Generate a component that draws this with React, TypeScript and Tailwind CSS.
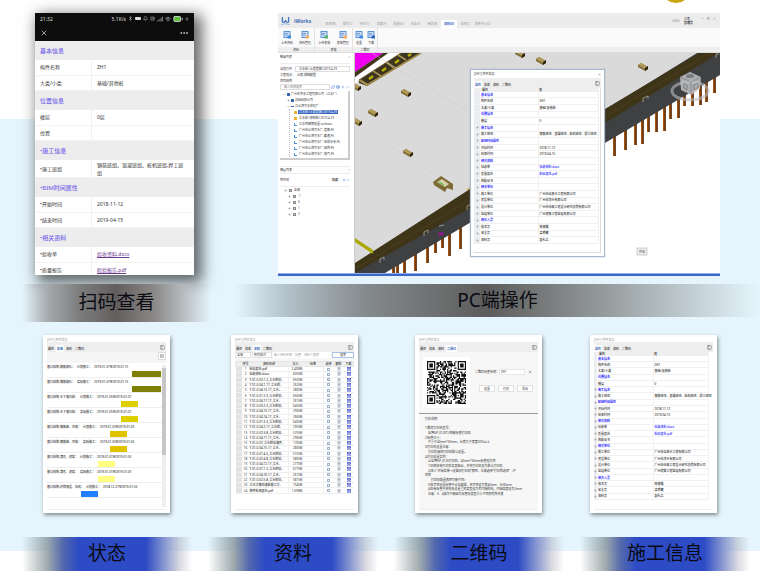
import React from "react";
import {
  X,
  Ellipsis,
  Bell,
  AlarmClock,
  Wifi,
  Signal,
  Bluetooth,
  BatteryMedium,
  Zap,
  PanelLeft,
  RefreshCw,
  Globe,
  Trash2,
  SquarePen,
  Download,
  Plus,
  Minus,
} from "lucide-react";

/* ---------- Phone ---------- */

type Pair = [string, string, boolean?];

function PhoneSection({ title, rows, tall }: { title: string; rows: Pair[]; tall?: boolean }) {
  return (
    <section className="shrink-0">
      <h2 className="flex h-[19px] items-center bg-[#ededed] pl-[5px] text-[6px] font-medium leading-[8px] text-[#7767ea]">
        {title}
      </h2>
      <dl className={tall ? "grid h-[18px]" : "grid h-[31px] grid-rows-2"}>
        {rows.map(([k, v, link]) => (
          <div key={k} className="grid grid-cols-[57px_1fr] items-stretch border-b border-[#f3f3f3]">
            <dt className="flex items-center border-r border-[#f0f0f0] pl-[5px]">{k}</dt>
            <dd className="flex items-center pl-[5px] pr-2">
              {link ? (
                <a href="#file" className="text-[#6b3a8f] underline">
                  {v}
                </a>
              ) : (
                v
              )}
            </dd>
          </div>
        ))}
      </dl>
    </section>
  );
}

function Phone() {
  return (
    <div className="flex h-[262px] w-[159px] flex-col overflow-hidden bg-white text-[5px] leading-[8px] text-[#333] shadow-[5px_5px_14px_3px_rgba(0,0,0,0.6)]">
      <header className="h-7 shrink-0 bg-[#0d0d0d] px-[5px] text-[#ddd]">
        <div className="flex h-[11px] items-center justify-between">
          <span>21:32</span>
          <span className="flex items-center gap-[2px]">
            <span>5.1K/s</span>
            <Bluetooth size={5} />
            <span className="h-[3px] w-[6px] rounded-[1px] bg-[#ddd]" />
            <Bell size={5} />
            <AlarmClock size={5} />
            <Signal size={6} />
            <Wifi size={6} />
            <BatteryMedium size={10} className="fill-[#5fbf3a]" />
            <Zap size={4} />
          </span>
        </div>
        <div className="flex h-[17px] items-center justify-between">
          <button aria-label="关闭">
            <X size={8} strokeWidth={2} />
          </button>
          <button aria-label="更多">
            <Ellipsis size={10} strokeWidth={2} />
          </button>
        </div>
      </header>
      <PhoneSection title="基本信息" rows={[["构件名称", "ZH1"], ["大类/小类", "基础/其他桩"]]} />
      <PhoneSection title="位置信息" rows={[["楼层", "0层"], ["位置", ""]]} />
      <PhoneSection title="•施工信息" tall rows={[["•施工班组", "钢筋班组、混凝班组、桩机班组,焊工班组"]]} />
      <PhoneSection title="•BIM时间属性" rows={[["•开始时间", "2018-11-12"], ["•结束时间", "2019-04-15"]]} />
      <PhoneSection title="•相关资料" rows={[["•验收单", "验收资料.docx", true], ["•质量报告", "检验报告.pdf", true]]} />
    </div>
  );
}

/* ---------- Shared property sheet ---------- */

const sheet: { k: string; v?: string; head?: boolean; link?: boolean }[] = [
  { k: "基本信息", head: true },
  { k: "构件名称", v: "ZH1" },
  { k: "大类/小类", v: "基础/其他桩" },
  { k: "位置信息", head: true },
  { k: "楼层", v: "0" },
  { k: "施工信息", head: true },
  { k: "施工班组", v: "钢筋班组、混凝班组、桩机班组、焊工班组" },
  { k: "BIM时间属性", head: true },
  { k: "开始时间", v: "2018-11-12" },
  { k: "结束时间", v: "2019-04-15" },
  { k: "相关资料", head: true },
  { k: "验收单", v: "验收资料.docx", link: true },
  { k: "质量报告", v: "检验报告.pdf", link: true },
  { k: "构配证书" },
  { k: "相关单位", head: true },
  { k: "施工单位", v: "广州市自来水工程有限公司" },
  { k: "建设单位", v: "广州市净水有限公司" },
  { k: "设计单位", v: "广州市市政工程设计研究总院有限公司" },
  { k: "监理单位", v: "广州建筑工程监理有限公司" },
  { k: "相关人员", head: true },
  { k: "技术员", v: "陈俊雄" },
  { k: "安全员", v: "梁明耀" },
  { k: "资料员", v: "彭礼兵" },
];

function PropertyTable({ narrow }: { narrow?: boolean }) {
  return (
    <table
      className={
        narrow
          ? "h-[148px] w-[115px] table-fixed border-collapse"
          : "h-[156px] w-[125px] table-fixed border-collapse"
      }
    >
      <colgroup>
        <col className={narrow ? "w-[3px]" : "w-[6px]"} />
        <col className={narrow ? "w-[56px]" : "w-[58px]"} />
        <col />
      </colgroup>
      <thead>
        <tr className="bg-[#efefef] text-left">
          <td className="p-0" />
          <th className="p-0 pl-[2px] font-medium">属性</th>
          <th className="p-0 pl-px font-medium">值</th>
        </tr>
      </thead>
      <tbody>
        {sheet.map((r, i) => (
          <tr key={r.k} className="border-b border-[#f1f1f1]">
            <td className="bg-[#e9ecf0] p-0">
              {i > 4 && <Plus size={3} className="mx-auto text-[#555]" />}
            </td>
            <td className={r.head ? "p-0 pl-px font-bold text-[#1a1aff]" : "p-0 pl-px font-medium"}>{r.k}</td>
            <td className="whitespace-nowrap border-l border-r border-[#f1f1f1] p-0 pl-px font-medium">
              {r.link ? (
                <a href="#file" className="text-[#1a1aff]">
                  {r.v}
                </a>
              ) : (
                r.v
              )}
            </td>
          </tr>
        ))}
      </tbody>
    </table>
  );
}

function PanelTabs({ active }: { active: number }) {
  return (
    <div className="flex h-[10px] shrink-0 items-center justify-between bg-[#eee] pr-px">
      <div className="flex h-full items-end gap-px">
        {["属性", "状态", "资料", "二维码"].map((t, i) => (
          <button
            key={t}
            className={
              i === active ? "h-[7px] bg-white px-px font-bold text-[#2f62b5]" : "h-[7px] px-px font-medium text-[#333]"
            }
          >
            {t}
          </button>
        ))}
      </div>
      <button aria-label="面板" className="text-[#555]">
        <PanelLeft size={5} />
      </button>
    </div>
  );
}

/* ---------- Desktop application ---------- */

const menu = ["项目(W)", "操作(C)", "技术(T)", "进度(P)", "质量(Q)", "安全(S)", "商务(B)", "资料(D)", "协同(C)", "系统中心(O)"];

const ribbon = [
  { name: "资料", items: [["上传资料", "#3f8ad8"], ["资料管理", "#f0b060"]], w: "w-[37px]" },
  { name: "表格", items: [["上传表格", "#58b070"], ["表格管理", "#f0b060"]], w: "w-[38px]" },
  { name: "二维码", items: [["设置", "#3f8ad8"], ["下载", "#2f62c5"]], w: "w-[25px]" },
] as const;

/* Document sheet with a small coloured badge in its corner */
function RibbonIcon({ accent }: { accent: string }) {
  return (
    <svg viewBox="0 0 8 8" className="size-2" aria-hidden="true">
      <rect x="1" y="0.5" width="6" height="6" fill="#cfe0f6" stroke="#5b8fd6" />
      <path d="M2 2.5h3M2 4h2.5" stroke="#4a7fce" strokeWidth="0.7" />
      <rect x="4.5" y="4.5" width="3.5" height="3" fill={accent} />
    </svg>
  );
}

const tree = [
  "江水桩 (土建建筑) 2019.4.29",
  "江水桩 (预制桩) 2019.4.29",
  "江水构筑物设置 tushuzu",
  "广州市沙湾污水厂-建筑.F5",
  "广州市沙湾污水厂-暖通.F5",
  "广州市沙湾污水厂-给排水专.F5",
  "广州市沙湾污水厂-结构.F5",
  "广州市沙湾污水厂-电气.F5",
];

function SidePane() {
  return (
    <aside className="flex w-[77px] shrink-0 flex-col border-r border-[#ccc] bg-white pl-[2px] pr-1 text-[#333]">
      <div className="flex h-2 items-center justify-between">
        <span>数据列表</span>
        <span className="text-[#3f6db5]">«</span>
      </div>
      <div className="mt-[2px] flex h-[9px] items-center gap-[3px] border-t border-[#eee] pt-[2px]">
        <label htmlFor="current" className="w-3 whitespace-nowrap">
          当前打开
        </label>
        <select
          id="current"
          className="h-[6px] min-w-0 flex-1 appearance-none border border-[#ddd] bg-white pl-[3px] leading-[4px]"
        >
          <option>江水桩 (土建建筑) 2019.4.29</option>
        </select>
      </div>
      <div className="flex h-[6px] items-center gap-[2px]">
        <span>工程地点：</span>
        <span className="font-medium">土建-预制模型</span>
      </div>
      <div className="flex h-[6px] items-center">项目结构</div>
      <div className="flex h-[6px] items-center gap-px text-[#3f7bdc]">
        <input
          aria-label="输入名称搜索"
          placeholder="输入名称搜索"
          className="h-[6px] min-w-0 flex-1 border border-[#ddd] px-[3px] leading-[4px] placeholder:text-[#777]"
        />
        <RefreshCw size={4} />
        <Globe size={4} />
        <Plus size={4} />
        <Minus size={4} />
      </div>
      <div className="mt-px h-[69px] border-b-2 border-r-2 border-[#ccc] pl-[3px]">
        <div className="flex h-[6px] items-center gap-px">
          <Minus size={3} />
          <span className="size-[3px] bg-[#3567b5]" />
          <span className="whitespace-nowrap">广州市净水工程有限公司（江水厂）</span>
        </div>
        <div className="ml-1 flex h-[6px] items-center gap-px">
          <Plus size={3} />
          <span className="size-[3px] bg-[#3567b5]" />
          <span>初始标段公司</span>
        </div>
        <div className="ml-1 flex h-[6px] items-center gap-px">
          <Minus size={3} />
          <span className="h-px w-[3px] bg-[#3567b5]" />
          <span>江沙湾污水处理厂</span>
        </div>
        <ul className="ml-[6px] border-l border-dotted border-[#bbb] pl-1">
          {tree.map((t, i) => (
            <li key={t} className="flex h-[6px] items-center gap-px whitespace-nowrap">
              <span className={i < 2 ? "size-[3px] bg-[#f0b030]" : "size-[3px] border-b border-l border-[#4a90d9]"} />
              <span className={i === 0 ? "bg-[#3465c0] px-px text-white" : "px-px"}>{t}</span>
            </li>
          ))}
        </ul>
      </div>
      <div className="mt-[6px] flex h-2 items-center justify-between border-y border-[#eee]">
        <span>楼层列表</span>
        <span className="text-[#3f6db5]">«</span>
      </div>
      <div className="mt-[2px] flex h-2 items-center">
        <span>构件树</span>
        <span className="ml-auto mr-1 font-medium">隐藏</span>
        <Plus size={4} className="text-[#3f7bdc]" />
        <Minus size={4} className="text-[#3f7bdc]" />
      </div>
      <div className="mt-[2px] flex-1 border-t border-[#eee] pl-1">
        {["全部", "-1", "0", "1", "2"].map((t, i) => (
          <label key={t} className={i ? "ml-1 flex h-[6px] items-center gap-[2px]" : "flex h-[6px] items-center gap-[2px]"}>
            <Plus size={3} />
            <input
              type="checkbox"
              defaultChecked
              className="size-[3px] appearance-none border border-[#888] bg-[#ddd]"
            />
            {t}
          </label>
        ))}
      </div>
    </aside>
  );
}

const piles: [number, number, number][] = [
  [38, 208, 220], [42, 205, 220], [49, 198, 220], [60, 190, 218], [72, 184, 210], [80, 178, 200],
  [87, 175, 195], [94, 170, 203], [105, 162, 196], [259, 84, 103], [270, 76, 97], [280, 70, 92],
  [287, 66, 91], [293, 60, 79], [301, 57, 79], [309, 53, 78], [315, 48, 66], [323, 43, 65],
  [329, 40, 53], [337, 36, 53], [345, 32, 52], [351, 28, 49], [359, 22, 40],
];

const blocks: [number, number][] = [[51, 40], [18, 60], [1, 34], [2, 69], [53, 100], [165, 1], [186, 8], [288, 14]];

function Scene() {
  return (
    <svg viewBox="0 0 365 220" preserveAspectRatio="xMinYMin slice" className="h-full w-full bg-white" aria-label="三维模型">
      <polygon points="0,0 342,0 0,212" fill="#dadada" />
      <polygon points="0,24 34,0 46,0 4,27 0,32" fill="#fff" />
      <polygon points="0,0 28,0 0,19" fill="#ee00ee" />
      <polygon points="28,0 33,0 0,24 0,19" fill="#40331a" />
      <polygon points="4,27 46,0 66,0 12,33 4,30" fill="#3d3420" />
      <path d="M4 27L12 32L66 0" fill="none" stroke="#a08a4a" strokeWidth="1.8" />
      <path d="M4 27L46 0" fill="none" stroke="#6f6034" strokeWidth="1" />
      <path d="M5 27l8 5M18 18l8 5M31 9l8 6M43 2l8 5" stroke="#a89252" strokeWidth="1.8" />
      <path d="M14 26l4-3M27 18l4-3M40 10l4-3M53 3l3-2" stroke="#b8b000" strokeWidth="2.4" />
      {piles.map(([x, y1, y2]) => (
        <g key={x}>
          <rect x={x - 1} y={y1 - 8} width="2.6" height={y2 - y1 + 8} fill="#a4530f" />
          <rect x={x + 0.5} y={y1 - 8} width="1.2" height={y2 - y1 + 8} fill="#4a260a" />
        </g>
      ))}
      <polygon points="0,212 342,0 365,0 365,22 30,220 0,220" fill="#3f4042" />
      <polygon points="0,210 115,136 250,56 344,0 364,0 250,70 115,155 0,220" fill="#3e3418" />
      <path d="M0 216L115 147L250 64L354 0" fill="none" stroke="#544722" strokeWidth="0.6" />
      <path d="M17 0L115 60M18 82L98 133M203 18L258 52" stroke="#cdcdcd" strokeWidth="0.5" />
      <path d="M112 137l3-2" stroke="#c0a030" strokeWidth="1.2" />
      <polygon points="0,185 18,197 18,201 0,189" fill="#aaa800" />
      {blocks.map(([x, y]) => (
        <g key={x} transform={`translate(${x} ${y})`}>
          <polygon points="-5,-2 -2,-4 5,0 5,2 2,4 -5,0" fill="#7d6a34" />
          <polygon points="-5,-2 -2,-4 5,0 2,2" fill="#b09a5a" />
          <polygon points="2,1 5,-1 5,2 2,4" fill="#2c230f" />
        </g>
      ))}
      <polygon points="78,129 86,123 98,131 98,137 92,135 90,139 79,132" fill="#7d6a34" />
      <polygon points="82,129 87,126 94,131 90,134" fill="#d7cfa8" />
      <path d="M84 129l5 3" stroke="#42b43c" strokeWidth="1" />
      <path d="M83 180l5 2l-1-3l-3 4" stroke="#c000c0" strokeWidth="0.9" fill="none" />
      <g stroke="#ccc" strokeWidth="0.6" fill="none">
        <path d="M69 183v-4l4-2v3M25 210v-4l4-2v3M112 157v-4l4-2M288 49v-4l5-2v3M361 5v-4h3M84 173l5-1" />
      </g>
      <ellipse cx="335" cy="38" rx="18" ry="9" fill="none" stroke="#b9bcc0" strokeWidth="3" opacity="0.6" />
      <g opacity="0.85">
        <polygon points="325,24 335,19 346,24 345,36 336,42 326,37" fill="#bfc1c3" />
        <path d="M325 24l11 5l10-5M336 29v13" stroke="#85888c" strokeWidth="0.7" fill="none" />
        <path d="M329 30v5l3 2v-5zM339 32l4-2v5l-4 2z" stroke="#74777b" strokeWidth="0.7" fill="none" />
        <ellipse cx="335" cy="23" rx="4" ry="2" fill="#85888c" />
      </g>
      <rect x="282" y="195" width="10" height="7" fill="#eee" stroke="#bbb" strokeWidth="0.7" />
      <text x="284" y="200" fontSize="3" fill="#555">外部</text>
    </svg>
  );
}

function DesktopApp() {
  return (
    <div className="flex h-[263px] flex-col bg-white text-[3px] leading-[4px] text-[#333]">
      <header className="flex h-[15px] shrink-0 items-center bg-[#ececec] pl-[3px] pr-1">
        <svg viewBox="0 0 20 18" className="mr-1 h-2 w-[9px]" aria-hidden="true">
          <path d="M3 0v11l4 1l3-4l3 4l4-1V0" fill="none" stroke="#4a78c0" strokeWidth="3" />
          <path d="M0 17q10-4 20 0" fill="none" stroke="#8fb0e0" strokeWidth="2" />
        </svg>
        <h1 className="w-7 pt-px text-[5px] font-bold leading-[8px] text-[#3f6db5]">iWorks</h1>
        <nav className="flex h-full items-end">
          {menu.map((m) => (
            <button
              key={m}
              className={
                m === "资料(D)"
                  ? "h-2 w-4 bg-white font-bold text-[#2f62c5]"
                  : "h-2 w-[17px] whitespace-nowrap text-[#999]"
              }
            >
              {m}
            </button>
          ))}
        </nav>
        <span className="ml-auto mr-1 h-[3px] w-2 rounded-t-full bg-[#ccc]" />
        <span className="mr-2">
          江南
          <br />
          <b>管理员</b>
        </span>
        <span className="mb-1 flex gap-[3px] text-[#666]">
          <button aria-label="最小化"><Minus size={3} /></button>
          <button aria-label="还原"><PanelLeft size={3} /></button>
          <button aria-label="关闭"><X size={3} /></button>
        </span>
      </header>
      <div className="flex h-[25px] shrink-0 border-b border-[#ddd] bg-[linear-gradient(#fafafa_19px,#eeeeee_19px)]">
        {ribbon.map((g) => (
          <div key={g.name} className={g.w + " flex flex-col border-r border-[#e2e2e2]"}>
            <div className="flex h-5 items-center justify-around">
              {g.items.map(([label, accent]) => (
                <button key={label} className="flex flex-col items-center gap-[2px] whitespace-nowrap">
                  <RibbonIcon accent={accent} />
                  {label}
                </button>
              ))}
            </div>
            <span className="text-center">{g.name}</span>
          </div>
        ))}
      </div>
      <div className="flex min-h-0 flex-1">
        <SidePane />
        <div className="relative min-w-0 flex-1">
          <Scene />
          <section className="absolute left-[115px] top-4 flex h-[188px] w-[135px] flex-col border border-[#aab8d0] bg-white px-[3px] shadow-[0_0_1px_#8fa3c4]">
            <div className="flex h-2 items-center justify-between">
              <h2>[ZH1] 构件信息</h2>
              <button aria-label="关闭对话框"><X size={3} /></button>
            </div>
            <PanelTabs active={0} />
            <div className="border-b border-r border-[#ddd] pb-2">
              <PropertyTable />
            </div>
          </section>
        </div>
      </div>
      <footer className="h-[3px] shrink-0 border-t border-[#8fabe3] bg-[#3a68cc]" />
    </div>
  );
}

/* ---------- Cards ---------- */

function Card({ active, children }: { active: number; children: React.ReactNode }) {
  return (
    <article className="flex h-[178px] w-[127px] flex-col bg-white px-1 py-[3px] text-[3px] leading-[4px] text-[#333] shadow-[1px_2px_4px_rgba(0,0,0,0.45)]">
      <h3 className="h-1 text-[#999]">[ZH1] 构件信息</h3>
      <PanelTabs active={active} />
      <div className="flex min-h-0 flex-1 flex-col border-b border-[#eee]">{children}</div>
    </article>
  );
}

const tasks = [
  ["基坑结构-钢筋绑扎：", "计划施工：", "2019-01-07至2019-01-15", "ml-[85px] w-[29px] bg-[#808000]"],
  ["基坑结构-钢筋绑扎：", "实际施工：", "2019-01-07至2019-01-15", "ml-[85px] w-[29px] bg-[#808000]"],
  ["基坑结构-水下灌注桩：", "计划施工：", "2019-01-05至2019-01-07", "ml-[74px] w-[17px] bg-[#ddcf00]"],
  ["基坑结构-水下灌注桩：", "实际施工：", "2019-01-05至2019-01-07", "ml-[74px] w-[17px] bg-[#ddcf00]"],
  ["基坑结构-钢筋笼、吊装：", "计划施工：", "2019-01-03至2019-01-05", "ml-[63px] w-[17px] bg-[#dfc200]"],
  ["基坑结构-钢筋笼、吊装：", "实际施工：", "2019-01-03至2019-01-05", "ml-[63px] w-[17px] bg-[#dfc200]"],
  ["基坑结构-清孔、泥浆：", "计划施工：", "2019-01-01至2019-01-03", "ml-[51px] w-[17px] bg-[#ffff80]"],
  ["基坑结构-清孔、泥浆：", "实际施工：", "2019-01-01至2019-01-03", "ml-[51px] w-[17px] bg-[#ffff80]"],
  ["基坑结构-护筒埋设、钻机：", "计划施工：", "2018-12-27至2019-01-03", "ml-[34px] w-[17px] bg-[#2080ff]"],
];

function StatusCard() {
  return (
    <Card active={1}>
      <div className="flex h-[11px] shrink-0 items-start justify-end bg-[#f5f5f5]">
        <button aria-label="编辑" className="border border-[#ddd] bg-white p-px">
          <SquarePen size={4} />
        </button>
      </div>
      <div className="flex flex-1">
        <ul className="min-w-0 flex-1">
          {tasks.map(([a, b, c, bar]) => (
            <li key={a + b} className="h-[15px] border-b border-[#eee] pt-[2px]">
              <p className="flex gap-[2px] whitespace-nowrap font-medium">
                <span>{a}</span>
                <span>{b}</span>
                <span>{c}</span>
              </p>
              <div className={bar + " mt-[2px] h-[6px]"} />
            </li>
          ))}
        </ul>
        <div className="my-[2px] w-1 bg-[#eee] pt-[3px]">
          <div className="h-[87px] bg-[#c6c6c6]" />
        </div>
      </div>
    </Card>
  );
}

const files: [string, string][] = [
  ["检验报告.pdf", "2.42MB"],
  ["验收资料.docx", "605KB"],
  ["Y-S1-0-03-1-3_立水的钻..", "650KB"],
  ["Y-S1-0-04-1-17_立水的..", "262KB"],
  ["Y-S1-0-04-13-17_立水..", "280KB"],
  ["Y-S1-0-01-2-3_立水的钻..", "656KB"],
  ["Y-S1-0-04-17-17_立水..", "261KB"],
  ["Y-S1-0-03-2-3_立水的钻..", "645KB"],
  ["Y-S1-0-04-10-17_立水..", "290KB"],
  ["Y-S1-0-04-14-17_立水..", "266KB"],
  ["Y-S1-0-01-3-3_立水的钻..", "645KB"],
  ["Y-S1-0-04-2-17_立水的..", "295KB"],
  ["Y-S1-0-02-3-8_立水的钻..", "575KB"],
  ["Y-S1-0-04-11-17_立水..", "296KB"],
  ["Y-S1-0-02_立水的钻灌件..", "176KB"],
  ["Y-S1-0-04-15-17_立水..", "280KB"],
  ["Y-S1-0-01-4-3_立水的钻..", "515KB"],
  ["Y-S1-0-02-4-8_立水的钻..", "585KB"],
  ["Y-S1-0-04-12-17_立水..", "277KB"],
  ["Y-S1-0-01-1-3_立水的钻..", "677KB"],
  ["Y-S1-0-04-16-17_立水..", "261KB"],
  ["Y-S1-0-02-5-8_立水的钻..", "581KB"],
  ["立水江钢钻灌桩施工方..", "734KB"],
  ["构件检测报告.pdf", "1.07MB"],
];

function FilesCard() {
  return (
    <Card active={2}>
      <div className="flex h-[9px] shrink-0 items-start gap-px bg-[#f7f7f7]">
        <select aria-label="范围" className="h-[6px] w-4 appearance-none border border-[#e2e2e2] bg-white px-px leading-[4px]">
          <option>全部</option>
        </select>
        <select aria-label="文件格式" className="h-[6px] w-[20px] appearance-none border border-[#e2e2e2] bg-white px-px leading-[4px]">
          <option>所有格式</option>
        </select>
        <input
          aria-label="搜索资料"
          placeholder="输入资料名称、标签、资料人搜索"
          className="h-[6px] min-w-0 flex-1 bg-white px-px leading-[4px] placeholder:text-[#999]"
        />
        <button className="h-[6px] w-[22px] border border-[#a9c2e6] bg-white">搜索</button>
      </div>
      <table className="h-[133px] w-full table-fixed border-collapse">
        <colgroup>
          <col className="w-[6px]" />
          <col className="w-2" />
          <col className="w-[39px]" />
          <col className="w-[14px]" />
          <col className="w-[21px]" />
          <col className="w-[10px]" />
          <col className="w-[10px]" />
          <col />
        </colgroup>
        <thead>
          <tr className="border border-[#e4e4e4] bg-[#efefef]">
            <td className="p-0" />
            {["序号", "资料名称", "大小", "标签", "选择", "删除", "下载"].map((h) => (
              <th key={h} className="p-0 font-medium">{h}</th>
            ))}
          </tr>
        </thead>
        <tbody>
          {files.map(([n, s], i) => (
            <tr key={n} className="border-b border-[#efefef]">
              <td className="bg-[#e2e2e2] p-0" />
              <td className="p-0 text-center">{i + 1}</td>
              <td className="whitespace-nowrap border-r border-[#efefef] p-0 font-medium">{n}</td>
              <td className="border-r border-[#efefef] p-0 text-right">{s}</td>
              <td className="border-r border-[#efefef] p-0" />
              <td className="p-0">
                <input type="checkbox" aria-label={"选择 " + n} className="mx-auto block size-[3px] appearance-none border border-[#9fb3cb]" />
              </td>
              <td className="p-0">
                <button aria-label="删除" className="block w-full text-[#6d7f95]"><Trash2 size={4} className="mx-auto" /></button>
              </td>
              <td className="p-0">
                <button aria-label="下载" className="mx-auto block bg-[#5060d0] text-white"><Download size={4} strokeWidth={3} /></button>
              </td>
            </tr>
          ))}
        </tbody>
      </table>
    </Card>
  );
}

const N = 33;

function moduleOn(x: number, y: number) {
  const corner = (cx: number, cy: number) => {
    const dx = Math.abs(x - cx);
    const dy = Math.abs(y - cy);
    const d = Math.max(dx, dy);
    return d <= 4 ? (d === 3 || d <= 1 ? 1 : 0) : -1;
  };
  for (const [cx, cy] of [[3, 3], [N - 4, 3], [3, N - 4]]) {
    const c = corner(cx, cy);
    if (c >= 0) return c === 1;
  }
  const dd = Math.max(Math.abs(x - (N - 7)), Math.abs(y - (N - 7)));
  if (dd <= 2) return dd !== 1;
  const h = Math.sin(x * 127.1 + y * 311.7) * 43758.5453;
  return h - Math.floor(h) > 0.46;
}

function QrImage() {
  let d = "";
  for (let y = 0; y < N; y++) for (let x = 0; x < N; x++) if (moduleOn(x, y)) d += `M${x} ${y}h1v1h-1z`;
  return (
    <svg viewBox={`0 0 ${N} ${N}`} preserveAspectRatio="none" className="h-[43px] w-[39px]" aria-label="二维码">
      <path d={d} fill="#111" />
    </svg>
  );
}

const notes = [
  "打印说明：",
  "",
  "1)推荐打印机型号：",
  "　佳博GP-3120TU热敏标签打印机",
  "2)标签大小：",
  "　不小于40mm*30mm，长宽大于宽度30%以上",
  "3)打印机设置注意：",
  "　打印前请将打印机默认设置。",
  "4)打印设置实例：",
  "　以佳博GP-3120打印机，40mm*30mm标签纸为例",
  "　1)正确安装打印机及其驱动，并将打印机设为默认打印机",
  "　2)进入“开始菜单→设备和打印机”界面，右键选择“打印首选项”（不",
  "同的",
  "　　打印机配置界面可能不同）",
  "　3)在页面设置标签中点击编辑，将页面设为宽40mm、长30mm",
  "　4)在卷标签中将纸张设置里的类型设为有间隔的纸，间隔高度设为2mm",
  "　注意：3、4操作不能因为标签纸类型大小不同而有所改变",
];

function QrCard() {
  return (
    <Card active={3}>
      <div className="flex h-[62px] shrink-0 items-center gap-[5px] border-b border-[#999] bg-[#f7f7f7] pl-1">
        <div className="flex h-[51px] w-[47px] shrink-0 items-center justify-center bg-white">
          <QrImage />
        </div>
        <form className="min-w-0 flex-1 pb-1">
          <div className="flex items-center whitespace-nowrap">
            <label htmlFor="tag">二维码标签名称：</label>
            <input id="tag" defaultValue="ZH1" className="h-[6px] w-[26px] border border-[#e8e8e8] bg-white px-px leading-[4px]" />
            <X size={4} className="ml-[3px]" />
          </div>
          <div className="mt-[10px] flex gap-[3px] pl-1">
            {["设置", "打印", "导出"].map((b) => (
              <button key={b} type="button" className="h-[7px] w-4 border border-[#e2e2e2] bg-white">{b}</button>
            ))}
          </div>
        </form>
      </div>
      <div className="flex-1 bg-[#f7f7f7] pl-[6px] pt-[3px]">
        <div className="flex h-[79px] flex-col justify-between whitespace-nowrap">
          {notes.map((n, i) => (
            <p key={i} className="h-1">{n}</p>
          ))}
        </div>
      </div>
    </Card>
  );
}

function InfoCard() {
  return (
    <Card active={0}>
      <PropertyTable narrow />
    </Card>
  );
}

/* ---------- Page ---------- */

function BlueLabel({ children }: { children: string }) {
  return (
    <h2 className="flex h-[34px] items-center justify-center bg-[linear-gradient(90deg,rgba(120,130,130,0)_0%,rgba(120,135,140,0.7)_15%,#5469ad_24%,#2d4bc5_33%,#2d4bc5_73%,rgba(110,128,200,0.85)_83%,rgba(150,150,170,0.35)_93%,rgba(150,150,160,0)_100%)] pb-[2px]">
      {children}
    </h2>
  );
}

export default function App() {
  return (
    <main className="min-h-screen overflow-hidden bg-[linear-gradient(#fff_119px,#e6f5fd_119px,#e6f5fd_551px,#fff_551px)] font-['Noto_Sans','Noto_Sans_CJK_SC',sans-serif] text-[19px] leading-[24px] text-[#0a0a12]">
      <div className="relative flex pt-[13px]">
        <div className="absolute -top-[27px] left-[661px] size-[30px] rounded-full bg-[#c9a40c]" />
        <div className="w-[235px] shrink-0 pl-[22px]">
          <div className="pl-[13px]">
            <Phone />
          </div>
          <h2 className="relative mr-[24px] mt-[9px] flex h-[38px] items-center justify-center bg-[linear-gradient(90deg,rgba(150,155,160,0)_0%,#a5a9ac_14%,#7d7d7d_30%,#635e5e_50%,#8b8888_70%,#b3b7ba_84%,rgba(200,210,220,0)_100%)] pb-[2px]">
            扫码查看
          </h2>
        </div>
        <div className="min-w-0 flex-1">
          <div className="pl-[43px] pr-10">
            <DesktopApp />
          </div>
          <h2 className="mt-[8px] flex h-[33px] items-center justify-center bg-[linear-gradient(90deg,rgba(200,212,220,0)_0%,#b2c0c9_10%,#858a8c_25%,#5c5c5c_48%,#8f9494_68%,#bcc8cd_85%,rgba(220,232,238,0)_100%)] pb-[2px]">
            PC端操作
          </h2>
        </div>
      </div>
      <div className="mt-[13px] grid grid-cols-[188fr_184fr_175fr_128fr] pl-[43px] pr-[42px]">
        <StatusCard />
        <FilesCard />
        <QrCard />
        <InfoCard />
      </div>
      <div className="mt-6 grid grid-cols-4 gap-4 pl-[22px] pr-[10px]">
        <BlueLabel>状态</BlueLabel>
        <BlueLabel>资料</BlueLabel>
        <BlueLabel>二维码</BlueLabel>
        <BlueLabel>施工信息</BlueLabel>
      </div>
    </main>
  );
}
